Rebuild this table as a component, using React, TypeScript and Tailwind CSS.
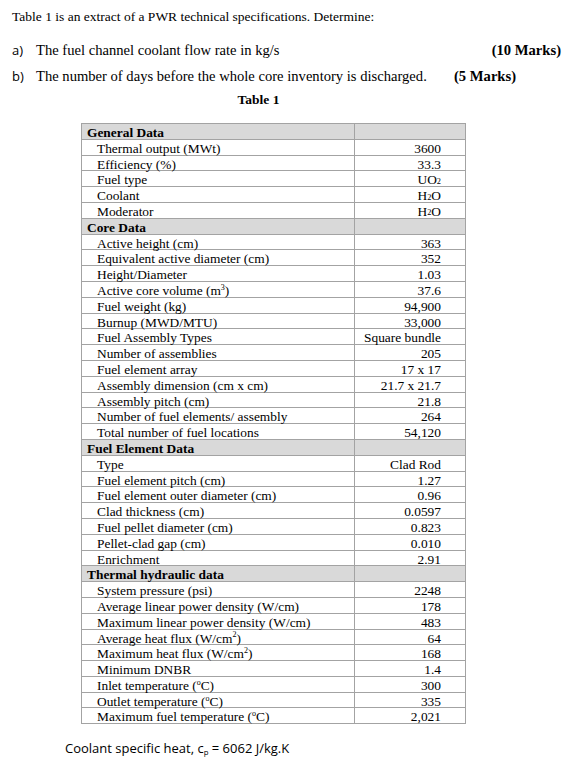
import React from 'react';

type Row = { label: React.ReactNode; value?: React.ReactNode; head?: boolean };

const sub = (t: string) => <sub className="text-[0.62em] align-baseline relative top-[0.2em]">{t}</sub>;
const sup = (t: string) => <sup className="text-[0.6em] align-baseline relative -top-[0.35em]">{t}</sup>;

const rows: Row[] = [
  { label: 'General Data', head: true },
  { label: 'Thermal output (MWt)', value: '3600' },
  { label: 'Efficiency (%)', value: '33.3' },
  { label: 'Fuel type', value: <>UO{sub('2')}</> },
  { label: 'Coolant', value: <>H{sub('2')}O</> },
  { label: 'Moderator', value: <>H{sub('2')}O</> },
  { label: 'Core Data', head: true },
  { label: 'Active height (cm)', value: '363' },
  { label: 'Equivalent active diameter (cm)', value: '352' },
  { label: 'Height/Diameter', value: '1.03' },
  { label: <>Active core volume (m{sup('3')})</>, value: '37.6' },
  { label: 'Fuel weight (kg)', value: '94,900' },
  { label: 'Burnup (MWD/MTU)', value: '33,000' },
  { label: 'Fuel Assembly Types', value: 'Square bundle' },
  { label: 'Number of assemblies', value: '205' },
  { label: 'Fuel element array', value: '17 x 17' },
  { label: 'Assembly dimension (cm x cm)', value: '21.7 x 21.7' },
  { label: 'Assembly pitch (cm)', value: '21.8' },
  { label: 'Number of fuel elements/ assembly', value: '264' },
  { label: 'Total number of fuel locations', value: '54,120' },
  { label: 'Fuel Element Data', head: true },
  { label: 'Type', value: 'Clad Rod' },
  { label: 'Fuel element pitch (cm)', value: '1.27' },
  { label: 'Fuel element outer diameter (cm)', value: '0.96' },
  { label: 'Clad thickness (cm)', value: '0.0597' },
  { label: 'Fuel pellet diameter (cm)', value: '0.823' },
  { label: 'Pellet-clad gap (cm)', value: '0.010' },
  { label: 'Enrichment', value: '2.91' },
  { label: 'Thermal hydraulic data', head: true },
  { label: 'System pressure (psi)', value: '2248' },
  { label: 'Average linear power density (W/cm)', value: '178' },
  { label: 'Maximum linear power density (W/cm)', value: '483' },
  { label: <>Average heat flux (W/cm{sup('2')})</>, value: '64' },
  { label: <>Maximum heat flux (W/cm{sup('2')})</>, value: '168' },
  { label: 'Minimum DNBR', value: '1.4' },
  { label: <>Inlet temperature ({sup('o')}C)</>, value: '300' },
  { label: <>Outlet temperature ({sup('o')}C)</>, value: '335' },
  { label: <>Maximum fuel temperature ({sup('o')}C)</>, value: '2,021' },
];

const serif = "font-['Liberation_Serif','Times_New_Roman',serif]";
const sans = "font-['Open_Sans','Liberation_Sans',sans-serif]";

export default function App() {
  return (
    <div className="w-[568px] h-[765px] bg-white text-black overflow-hidden">
      <div className={`${serif} text-[13.5px] pl-3 pt-[9px] h-[25px] leading-[16px]`}>
        Table 1 is an extract of a PWR technical specifications. Determine:
      </div>

      <div className="pl-3 pr-[7px] mt-[15px] h-[20px] leading-[20px] flex items-baseline">
        <span className={`${sans} text-[13px] w-[24px]`}>a)</span>
        <span className={`${serif} text-[14.6px] flex-1`}>The fuel channel coolant flow rate in kg/s</span>
        <span className={`${serif} text-[14.6px] font-bold`}>(10 Marks)</span>
      </div>

      <div className="pl-3 mt-[6px] h-[20px] leading-[20px] flex items-baseline">
        <span className={`${sans} text-[13px] w-[24px]`}>b)</span>
        <span className={`${serif} text-[14.6px] w-[418px]`}>The number of days before the whole core inventory is discharged.</span>
        <span className={`${serif} text-[14.6px] font-bold`}>(5 Marks)</span>
      </div>

      <div className={`${serif} text-[13.5px] font-bold w-[517px] text-center mt-[6px] h-[16px] leading-[16px]`}>Table 1</div>

      <div className={`${serif} ml-[81px] mt-[15px] w-[385px] border-t border-l border-r border-[#a3a3a3] text-[13.4px] leading-none`}>
        {rows.map((r, i) => (
          <div
            key={i}
            className={`grid grid-cols-[273px_1fr] h-[15.8px] border-b border-[#a3a3a3] ${r.head ? 'bg-[#d9d9d9] font-bold' : ''}`}
          >
            <div className={`border-r border-[#a3a3a3] flex items-center pt-[2px] ${r.head ? 'pl-[5px]' : 'pl-[15px]'} whitespace-nowrap`}>
              {r.label}
            </div>
            <div className="flex items-center justify-end pt-[2px] pr-[24px] whitespace-nowrap">{r.value}</div>
          </div>
        ))}
      </div>

      <div className={`${sans} text-[13px] pl-[65px] mt-[14px] h-[20px] leading-[20px]`}>
        Coolant specific heat, c<sub className="text-[0.6em] align-baseline relative top-[0.2em]">p</sub> = 6062 J/kg.K
      </div>
    </div>
  );
}
